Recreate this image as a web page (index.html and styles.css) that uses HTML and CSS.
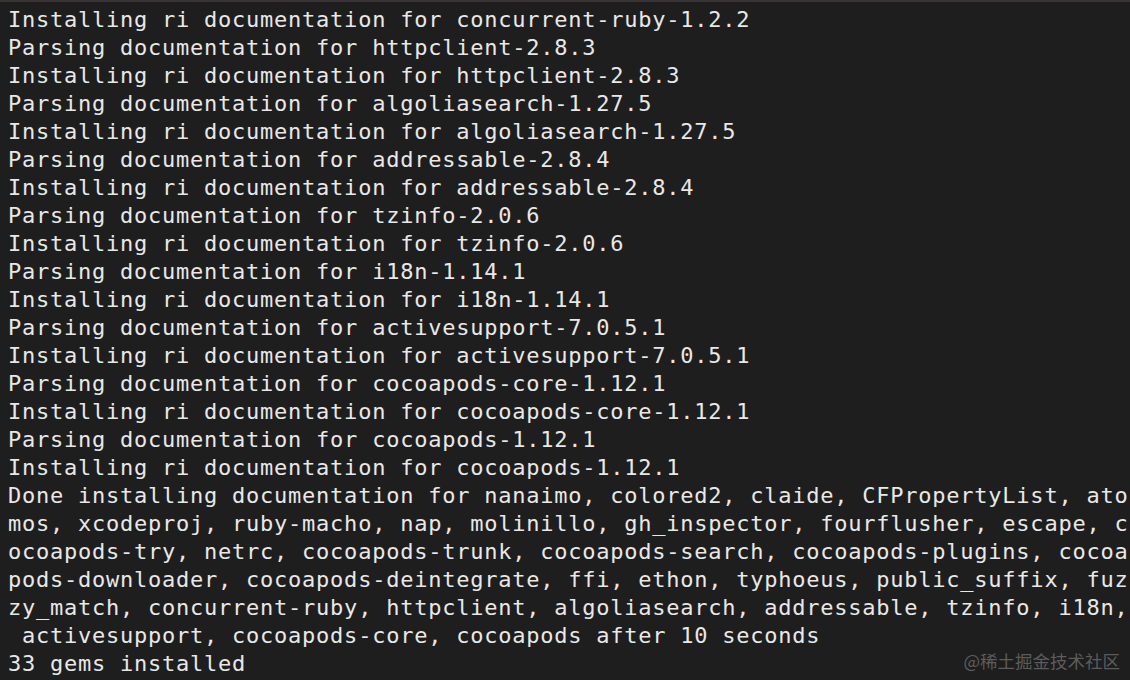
FILE: index.html
```html
<!DOCTYPE html>
<html lang="en">
<head>
<meta charset="utf-8">
<title>Terminal</title>
<link rel="stylesheet" href="styles.css">
</head>
<body>
<div class="terminal">
<div class="output">
<div class="line">Installing ri documentation for concurrent-ruby-1.2.2</div>
<div class="line">Parsing documentation for httpclient-2.8.3</div>
<div class="line">Installing ri documentation for httpclient-2.8.3</div>
<div class="line">Parsing documentation for algoliasearch-1.27.5</div>
<div class="line">Installing ri documentation for algoliasearch-1.27.5</div>
<div class="line">Parsing documentation for addressable-2.8.4</div>
<div class="line">Installing ri documentation for addressable-2.8.4</div>
<div class="line">Parsing documentation for tzinfo-2.0.6</div>
<div class="line">Installing ri documentation for tzinfo-2.0.6</div>
<div class="line">Parsing documentation for i18n-1.14.1</div>
<div class="line">Installing ri documentation for i18n-1.14.1</div>
<div class="line">Parsing documentation for activesupport-7.0.5.1</div>
<div class="line">Installing ri documentation for activesupport-7.0.5.1</div>
<div class="line">Parsing documentation for cocoapods-core-1.12.1</div>
<div class="line">Installing ri documentation for cocoapods-core-1.12.1</div>
<div class="line">Parsing documentation for cocoapods-1.12.1</div>
<div class="line">Installing ri documentation for cocoapods-1.12.1</div>
<div class="line">Done installing documentation for nanaimo, colored2, claide, CFPropertyList, ato</div>
<div class="line">mos, xcodeproj, ruby-macho, nap, molinillo, gh_inspector, fourflusher, escape, c</div>
<div class="line">ocoapods-try, netrc, cocoapods-trunk, cocoapods-search, cocoapods-plugins, cocoa</div>
<div class="line">pods-downloader, cocoapods-deintegrate, ffi, ethon, typhoeus, public_suffix, fuz</div>
<div class="line">zy_match, concurrent-ruby, httpclient, algoliasearch, addressable, tzinfo, i18n,</div>
<div class="line"> activesupport, cocoapods-core, cocoapods after 10 seconds</div>
<div class="line">33 gems installed</div>
</div>
<div class="watermark">@稀土掘金技术社区</div>
</div>
</body>
</html>
```
FILE: styles.css
```css
html, body {
  margin: 0;
  padding: 0;
  background: #1e1e1e;
}
body {
  width: 1130px;
  height: 680px;
  overflow: hidden;
}
.terminal {
  position: relative;
  height: 678px;
  border-top: 2px solid #3a3333;
  background: #1e1e1e;
}
.output {
  display: flex;
  flex-direction: column;
  align-items: flex-start;
  padding: 3.5px 0 0 8px;
  font-family: "DejaVu Sans Mono", "Liberation Mono", monospace;
  font-size: 22px;
  letter-spacing: 0.76px;
  line-height: 28px;
  color: #e8e8e8;
}
.line {
  white-space: pre;
}
.watermark {
  position: absolute;
  right: 10px;
  bottom: 8px;
  font-family: "Noto Sans CJK SC", "Noto Sans", sans-serif;
  font-size: 17.5px;
  line-height: 22px;
  color: #5c5c5c;
}
```
